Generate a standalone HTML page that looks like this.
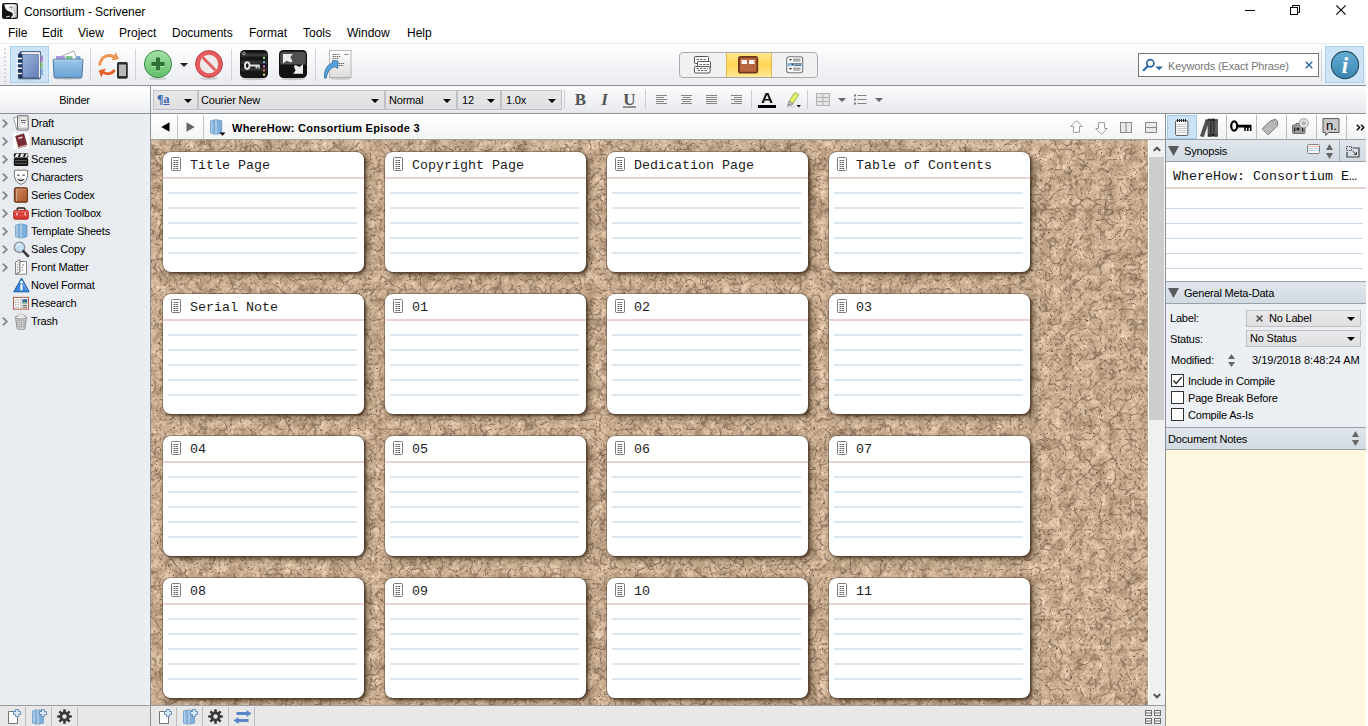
<!DOCTYPE html>
<html>
<head>
<meta charset="utf-8">
<title>Consortium - Scrivener</title>
<style>
*{box-sizing:border-box;margin:0;padding:0}
html,body{width:1368px;height:726px;overflow:hidden;background:#fff}
body{position:relative;font-family:"Liberation Sans",sans-serif;font-size:11px;color:#000}
svg{display:block;overflow:visible;position:absolute}
.a{position:absolute}
#title{position:absolute;left:0;top:0;width:1368px;height:22px;background:#fff}
#title .t{position:absolute;left:24px;top:5px;font-size:12px;line-height:15px;letter-spacing:-0.07px;white-space:nowrap}
#menu{position:absolute;left:0;top:22px;width:1368px;height:22px;background:#fff}
#menu span{position:absolute;top:4px;font-size:12px;line-height:15px;white-space:nowrap}
#tb{position:absolute;left:0;top:44px;width:1366px;height:42px;background:linear-gradient(#ffffff 0%,#f6f7f9 40%,#e9ebef 100%);border-bottom:1px solid #8a8e96}
.vs{position:absolute;width:1px;background:#cfd2d7}
.sel{position:absolute;background:#cde4f7;border:1px solid #a6d0f3}
#binderhdr{position:absolute;left:0;top:86px;width:150px;height:28px;background:linear-gradient(#ffffff,#eceef1);border-bottom:1px solid #8d9198;text-align:center;line-height:28px;font-size:11px;letter-spacing:-0.2px;padding-right:1px}
#fmt{position:absolute;left:151px;top:86px;width:1215px;height:28px;background:linear-gradient(#fcfcfd,#e7e9ed);border-bottom:1px solid #8d9198}
.combo{position:absolute;top:4px;height:20px;background:linear-gradient(#e8e8e9,#dfdfe1);border:1px solid #bfc1c5;font-size:11px;line-height:19px;padding-left:3px;white-space:nowrap;letter-spacing:-0.2px}
.combo i{position:absolute;right:5px;top:8px;width:0;height:0;border-left:4px solid transparent;border-right:4px solid transparent;border-top:4px solid #000}
.dd{position:absolute;width:0;height:0;border-left:4px solid transparent;border-right:4px solid transparent;border-top:4px solid #666}
#binder{position:absolute;left:0;top:114px;width:150px;height:591px;background:linear-gradient(90deg,#e8ecf1 0,#e8ecf1 144px,#ebeef3 145px,#ebeef3 150px)}
.row{position:absolute;left:0;width:150px;height:18px}
.row span{position:absolute;left:31px;top:2px;line-height:14px;font-size:11px;letter-spacing:-0.2px;white-space:nowrap}
.row svg.ch{left:2px;top:5px}
.row svg.ic{left:13px;top:1px}
#bsplit{position:absolute;left:150px;top:86px;width:1px;height:640px;background:#8d9198}
.foot{position:absolute;top:705px;height:21px;background:#e8e8e8;border-top:1px solid #999da3}
.foot .vs{top:1px;height:20px;background:#bdbdbd}
#edhdr{position:absolute;left:151px;top:114px;width:1014px;height:26px;background:linear-gradient(#ffffff,#f4f4f5);border-bottom:1px solid #a0a0a0}
#edhdr .ttl{position:absolute;left:81px;top:7px;font-size:11px;font-weight:bold;line-height:14px;white-space:nowrap;letter-spacing:0.25px}
#edhdr .vs{top:1px;height:24px;background:#c4c4c4}
#cork{position:absolute;left:151px;top:140px;width:997px;height:565px;overflow:hidden;background:#c2a990}
#corktex{position:absolute;left:0;top:0;width:997px;height:565px;filter:url(#ck);background:#c2a990}
.card{position:absolute;width:201px;height:120px;background:#fff;border-radius:8px;box-shadow:0 0 0 1px rgba(85,68,52,.4),2px 2px 2px 0 rgba(45,28,12,.5),3px 3px 7px 0 rgba(45,28,12,.5)}
.card .tt{position:absolute;left:27px;top:6px;font-family:"Liberation Mono",monospace;font-size:13.33px;line-height:16px;white-space:nowrap;color:#1c1c1c}
.card .pk{position:absolute;left:0;top:25px;width:201px;height:2px;background:#ecd2d0}
.card .bl{position:absolute;left:5px;top:40px;width:189px;height:62px;background:repeating-linear-gradient(#dae6f0 0,#dae6f0 2px,transparent 2px,transparent 15px)}
.card svg{left:8px;top:5px}
#vsb{position:absolute;left:1148px;top:140px;width:17px;height:565px;background:#f0f0f0;border-left:1px solid #fff}
#vsb .th{position:absolute;left:0;top:17px;width:15px;height:263px;background:#cdcdcd}
#isplit{position:absolute;left:1165px;top:114px;width:1px;height:612px;background:#8d9198}
#insp{position:absolute;left:1166px;top:86px;width:200px;height:640px;background:#eceff3;overflow:hidden}
.ihdr{position:absolute;left:0;width:202px;background:linear-gradient(#e0e6ec,#d2dae2);border-top:1px solid #9aa0a8;border-bottom:1px solid #9aa0a8;font-size:11px;white-space:nowrap;letter-spacing:-0.2px}
.cb{position:absolute;left:5px;width:13px;height:13px;background:#fff;border:1px solid #333}
.lbl{position:absolute;font-size:11px;line-height:14px;white-space:nowrap;letter-spacing:-0.2px}
.icmb{position:absolute;left:80px;width:115px;height:17px;background:linear-gradient(#e9e9ea,#e0e0e2);border:1px solid #bfc1c5;font-size:11px;line-height:15px;white-space:nowrap;letter-spacing:-0.2px}
.icmb i{position:absolute;right:5px;top:6px;width:0;height:0;border-left:4px solid transparent;border-right:4px solid transparent;border-top:4px solid #000}
</style>
</head>
<body>
<svg width="0" height="0" style="position:absolute">
<defs>
<filter id="ck" x="0" y="0" width="100%" height="100%" color-interpolation-filters="sRGB">
 <feTurbulence type="turbulence" baseFrequency="0.1" numOctaves="2" seed="8" result="t"/>
 <feColorMatrix in="t" type="matrix" values="0 0 0 0 0.47  0 0 0 0 0.37  0 0 0 0 0.29  -5 0 0 0 0.8" result="crease"/>
 <feTurbulence type="fractalNoise" baseFrequency="0.4" numOctaves="2" seed="2" result="n"/>
 <feColorMatrix in="n" type="matrix" values="0 0 0 0 0.42  0 0 0 0 0.32  0 0 0 0 0.24  -6 0 0 0 1.95" result="speck"/>
 <feTurbulence type="fractalNoise" baseFrequency="0.09" numOctaves="2" seed="4" result="f1"/>
 <feTurbulence type="fractalNoise" baseFrequency="0.33" numOctaves="2" seed="9" result="f2"/>
 <feComposite in="f1" in2="f2" operator="arithmetic" k1="0" k2="0.55" k3="0.45" k4="0" result="f"/>
 <feColorMatrix in="f" type="matrix" values="0.62 0 0 0 0.486  0.62 0 0 0 0.381  0.62 0 0 0 0.272  0 0 0 0 1" result="base"/>
 <feMerge><feMergeNode in="base"/><feMergeNode in="crease"/><feMergeNode in="speck"/></feMerge>
</filter>
<linearGradient id="gGreen" x1="0" y1="0" x2="0" y2="1"><stop offset="0" stop-color="#a6e0a8"/><stop offset="1" stop-color="#5fbf68"/></linearGradient>
<linearGradient id="gBlueCov" x1="0" y1="0" x2="1" y2="1"><stop offset="0" stop-color="#9db3dc"/><stop offset="1" stop-color="#6480b8"/></linearGradient>
<linearGradient id="gFolder" x1="0" y1="0" x2="0" y2="1"><stop offset="0" stop-color="#9cc6ea"/><stop offset="1" stop-color="#6aa3d4"/></linearGradient>
<linearGradient id="gInfo" x1="0" y1="0" x2="0" y2="1"><stop offset="0" stop-color="#62aed3"/><stop offset="1" stop-color="#3a86b2"/></linearGradient>
<linearGradient id="gYel" x1="0" y1="0" x2="0" y2="1"><stop offset="0" stop-color="#ffe78f"/><stop offset="0.5" stop-color="#ffd659"/><stop offset="1" stop-color="#ffe993"/></linearGradient>
<linearGradient id="gPaper" x1="0" y1="0" x2="0" y2="1"><stop offset="0" stop-color="#ffffff"/><stop offset="1" stop-color="#dcdcdc"/></linearGradient>
<linearGradient id="gBook" x1="0" y1="0" x2="1" y2="0"><stop offset="0" stop-color="#b9d6ee"/><stop offset="1" stop-color="#6a9fd0"/></linearGradient>
</defs></svg>
<!-- TITLE -->
<div id="title">
<svg width="16" height="16" style="left:2px;top:3px" viewBox="0 0 16 16"><defs><linearGradient id="gS" x1="0" y1="0" x2="1" y2="1"><stop offset="0" stop-color="#ffffff"/><stop offset="1" stop-color="#b9b9b9"/></linearGradient></defs><rect x="0" y="0" width="16" height="16" rx="2.200" fill="#151515"/><path d="M2.400 1.200H13.800Q14.800 1.200 14.800 2.200V13.800Q14.800 14.800 13.800 14.800H10.500C12.800 12 12 9.600 8.600 8.100 4.800 6.500 2.400 5 2.400 1.200Z" fill="url(#gS)"/><path d="M11.800 2.800C8.500 1.800 4.300 2.400 4.300 4.900 4.300 6.800 7.800 7.500 9.800 8.700 12.200 10.100 12.300 12.600 9.800 14.400" fill="none" stroke="#fff" stroke-width="1.500" stroke-linecap="round"/><path d="M10.800 4.300C9.600 3.500 8 3.800 7.800 4.800" fill="none" stroke="#666" stroke-width=".9"/><path d="M4.500 14L7.500 13.200" stroke="#eee" stroke-width="1" stroke-linecap="round"/></svg>
<div class="t">Consortium - Scrivener</div>
<svg width="11" height="1" style="left:1245px;top:10px"><rect width="10" height="1" fill="#000"/></svg>
<svg width="10" height="10" style="left:1290px;top:5px" viewBox="0 0 10 10"><path d="M2.5 2.5V0.5H9.5V7.5H7.5" fill="none" stroke="#000" stroke-width="1"/><rect x="0.5" y="2.500" width="7" height="7" fill="none" stroke="#000" stroke-width="1"/></svg>
<svg width="10" height="10" style="left:1336px;top:5px" viewBox="0 0 10 10"><path d="M0.300 0.300L9.700 9.700M9.700 0.300L0.300 9.700" stroke="#000" stroke-width="1.100" fill="none"/></svg>
</div>
<!-- MENU -->
<div id="menu">
<span style="left:8px">File</span><span style="left:42px">Edit</span><span style="left:78px">View</span><span style="left:119px">Project</span><span style="left:172px">Documents</span><span style="left:249px">Format</span><span style="left:303px">Tools</span><span style="left:347px">Window</span><span style="left:407px">Help</span>
</div>
<!-- TOOLBAR -->
<div class="a" style="left:0;top:43px;width:1366px;height:1px;background:#ececec"></div>
<div id="tb">
<!-- grip -->
<svg width="4" height="38" style="left:3px;top:3px"><g fill="#c3c6cb"><rect x="1.3" y="1.5" width="1.6" height="1.6"/><rect x="1.3" y="5.5" width="1.6" height="1.6"/><rect x="1.3" y="9.5" width="1.6" height="1.6"/><rect x="1.3" y="13.5" width="1.6" height="1.6"/><rect x="1.3" y="17.5" width="1.6" height="1.6"/><rect x="1.3" y="21.5" width="1.6" height="1.6"/><rect x="1.3" y="25.5" width="1.6" height="1.6"/><rect x="1.3" y="29.5" width="1.6" height="1.6"/><rect x="1.3" y="33.5" width="1.6" height="1.6"/></g></svg>
<div class="sel" style="left:10px;top:2px;width:39px;height:37px"></div>
<!-- binder notebook icon -->
<svg width="28" height="31" style="left:16px;top:6px" viewBox="0 0 28 31">
<ellipse cx="13.5" cy="29.200" rx="11" ry="1.300" fill="#000" opacity=".2"/>
<path d="M4 2.200Q4 1.200 5 1.200H23.500Q25 1.200 25 2.600V27.500Q25 28.700 24 28.700H3.200Q2 28.700 2 27.500V4.500Z" fill="#2b4570"/>
<path d="M5.500 2.100H24.200V4.300H5.500Z" fill="#f2f4f8"/>
<rect x="22.600" y="4" width="1.700" height="23.700" fill="#eef1f6"/>
<rect x="6.400" y="4.600" width="16.100" height="23" fill="url(#gBlueCov)"/>
<rect x="2.500" y="4.600" width="3.900" height="23.400" fill="#1f3558"/>
<path d="M0.900 8.500H5.300M0.900 13.400H5.300M0.900 18.300H5.300M0.900 23.500H5.300" stroke="#fff" stroke-width="1.500" stroke-linecap="round"/>
<rect x="24.700" y="5.500" width="2.100" height="6.500" rx=".8" fill="#a97fd0"/><rect x="24.700" y="12.500" width="2.100" height="5.600" rx=".4" fill="#8ccf6a"/><rect x="24.700" y="18.600" width="2.100" height="7" rx=".8" fill="#7ea7dc"/>
</svg>
<!-- folder icon -->
<svg width="33" height="31" style="left:52px;top:6px" viewBox="0 0 33 31">
<ellipse cx="16" cy="28.400" rx="14" ry="1.300" fill="#000" opacity=".18"/>
<path d="M9.500 6.200L21.800 1 24.200 7.500 23 9.500H9.500Z" fill="#fff" stroke="#8a8a8a" stroke-width=".7" stroke-linejoin="round"/>
<rect x="4" y="6" width="9" height="4" rx="1" fill="#a995d8"/><rect x="13.600" y="6" width="7" height="4" rx="1" fill="#7cc68a"/><rect x="24.200" y="6" width="4.200" height="4" rx="1" fill="#7aa6da"/>
<path d="M1.200 10.200Q1.100 9.200 2.100 9.200H30Q31 9.200 30.900 10.200L29.900 26.800Q29.800 27.800 28.800 27.800H3.200Q2.200 27.800 2.100 26.800Z" fill="url(#gFolder)" stroke="#3f6d96" stroke-width=".9"/>
<path d="M2 10.100H30.100" stroke="#cfe4f5" stroke-width=".7"/>
</svg>
<div class="vs" style="left:90px;top:5px;height:32px"></div>
<!-- sync icon -->
<svg width="32" height="30" style="left:97px;top:6px" viewBox="0 0 32 30">
<path d="M1.300 15.500C1.800 9 6 4.300 11.800 4.100 13.800 4.100 15.600 4.600 17.200 5.500L18.500 2 22.200 9 14.800 10.600 15.900 8C14.600 7.300 13.200 7 11.800 7 7.500 7.200 4.600 10.600 4.200 15.500Z" fill="#ee9650"/>
<path d="M1.600 20.400L9 18.500 7.300 21.400C8.800 22.200 10.600 22.500 12.300 22 14.200 21.500 15.600 20.500 16.600 19L18.800 20.800C17.500 23 15.400 24.500 12.800 25 10.300 25.400 7.900 24.900 5.900 23.700L4.400 27.800Z" fill="#e2622c"/>
<rect x="20" y="12.100" width="10.800" height="16.600" rx="1.600" fill="#2e2e2e"/><rect x="22" y="14.500" width="7" height="11.500" fill="#b8b8b8"/>
</svg>
<div class="vs" style="left:135px;top:5px;height:32px"></div>
<!-- add (green) center page (158,64) r14 => tb (158,20) -->
<svg width="30" height="32" style="left:143px;top:5px" viewBox="0 0 30 32">
<ellipse cx="15" cy="29.5" rx="9" ry="1.3" fill="#000" opacity=".15"/>
<circle cx="15" cy="15" r="13.6" fill="url(#gGreen)" stroke="#3f8a46" stroke-width="1"/>
<path d="M13 8.5H17V13H21.5V17H17V21.5H13V17H8.500V13H13Z" fill="#2f7137"/>
<path d="M13 22H17M8.500 17.500H12.500M17.500 17.500H21.500" stroke="#c9f0c8" stroke-width=".8" opacity=".8"/>
</svg>
<div class="dd" style="left:180px;top:19px;border-top-color:#222"></div>
<!-- delete (red) center page (209,64) -->
<svg width="30" height="32" style="left:194px;top:5px" viewBox="0 0 30 32">
<ellipse cx="15" cy="29.5" rx="9" ry="1.3" fill="#000" opacity=".15"/>
<circle cx="15" cy="15" r="13.4" fill="#e55c5e" stroke="#b9393d" stroke-width=".9"/>
<circle cx="15" cy="15" r="9.200" fill="#eeeaea"/>
<path d="M7.800 9.600L20.400 22.200 22.400 20.200 9.800 7.600Z" fill="#e55c5e"/>
</svg>
<div class="vs" style="left:231px;top:5px;height:32px"></div>
<!-- keywords HUD icon page x240-268,y50-78 -->
<svg width="29" height="31" style="left:240px;top:6px" viewBox="0 0 29 31">
<ellipse cx="14" cy="29" rx="12" ry="1.2" fill="#000" opacity=".18"/>
<rect x="0" y="0" width="28" height="28" rx="4.500" fill="#161616"/>
<rect x="0.800" y="3.500" width="26.400" height="3" fill="#3a3a3a"/><rect x="1" y="10.500" width="26" height="3.500" fill="#2e2e2e"/><rect x="1" y="17.500" width="26" height="3.500" fill="#2e2e2e"/>
<circle cx="4" cy="3.300" r="1.300" fill="none" stroke="#ddd" stroke-width=".7"/>
<g fill="none" stroke="#e6e6e6" stroke-width="1.900"><ellipse cx="7.200" cy="15.600" rx="2.300" ry="3.400"/></g>
<path d="M10 14.600H19.800V18.500H18.300V16.700H17.200V18.500H15.600V16.600H10Z" fill="#e6e6e6"/>
<rect x="23" y="6.800" width="2.100" height="2.200" fill="#9ccc6f"/><rect x="23" y="11" width="2.100" height="2.200" fill="#6aa3d8"/><rect x="23" y="15.200" width="2.100" height="2.200" fill="#b56cc0"/><rect x="23" y="19.400" width="2.100" height="2.200" fill="#cf6a72"/><rect x="23" y="23.600" width="2.100" height="2.200" fill="#e3c878"/>
</svg>
<!-- full screen icon page x279-307 -->
<svg width="29" height="31" style="left:279px;top:6px" viewBox="0 0 29 31">
<ellipse cx="14" cy="29" rx="12" ry="1.200" fill="#000" opacity=".18"/>
<rect x="0" y="0" width="28" height="28" rx="4.500" fill="#111"/>
<path d="M1.300 4.500Q1.300 1.800 4.500 1.800H23.500Q26.700 1.800 26.700 4.500V14.600H1.300Z" fill="#505050"/>
<path d="M4 4H13.900L11.400 6.900 13.400 11.200 11.900 12.600 7.700 10.700 4 13.400Z" fill="#ececec"/>
<path d="M24 23.800H14.100L16.600 20.600 14.900 16.600 16.400 15.100 20.600 16.900 24 14.100Z" fill="#ececec"/>
</svg>
<div class="vs" style="left:315px;top:5px;height:32px"></div>
<!-- compile icon page x324-351,y50-78 -->
<svg width="30" height="31" style="left:323px;top:6px" viewBox="0 0 30 31">
<ellipse cx="17" cy="28.600" rx="11" ry="1.200" fill="#000" opacity=".15"/>
<rect x="6.500" y="0.500" width="21.500" height="27" fill="url(#gPaper)" stroke="#a8a8a8" stroke-width=".8"/>
<g stroke="#444" stroke-width=".8" stroke-dasharray="1.500 0.600"><path d="M9.500 4.500H16.500M21.500 4.500H25.500M9.500 6.500H17.500M9.500 8.500H16"/><path d="M15.500 13.500H21.500M15.500 15.500H20.500"/></g>
<path d="M1.500 28C1 20 4 14.500 9.500 13.200V10.500L15 11 14.600 18.500 12.300 16.700C7.500 17.500 4.500 21 3.300 28Z" fill="#56a3dd" stroke="#2a6aa2" stroke-width=".8" stroke-linejoin="round"/>
</svg>
<!-- view mode group page x679-818, y52-77 -->
<div class="a" style="left:679px;top:8px;width:139px;height:26px;border:1px solid #a9abb0;border-radius:4px;background:#f1f1f2"></div>
<div class="a" style="left:726px;top:9px;width:46px;height:24px;background:linear-gradient(#ffe78f 0%,#ffd659 50%,#ffe993 100%);border-left:1px solid #e2b84a;border-right:1px solid #e2b84a"></div>
<!-- scrivenings icon -->
<svg width="18" height="18" style="left:694px;top:12px" viewBox="0 0 18 18">
<g fill="#fff" stroke="#555" stroke-width="1"><rect x="0.500" y="0.500" width="14" height="7" rx=".8"/><rect x="3.500" y="5.500" width="13" height="7" rx=".8"/><rect x="0.500" y="10.500" width="15.500" height="6.500" rx=".8"/></g>
<g stroke="#666" stroke-width="1" stroke-dasharray="2.500 1"><path d="M2.500 3.500H12.500M5.500 8.500H15M2.500 12.500H14M3.500 14.500H14"/></g>
</svg>
<!-- corkboard icon page x738-758,y56-73 -->
<svg width="21" height="18" style="left:738px;top:12px" viewBox="0 0 21 18">
<rect x="0.900" y="0.900" width="18.400" height="15.800" rx="1.500" fill="#b8663d" stroke="#70371a" stroke-width="1.800"/>
<rect x="3.500" y="4" width="5.500" height="4" fill="#fff"/><rect x="11" y="4" width="5.500" height="4" fill="#fff"/>
<path d="M3.500 5.300H9M11 5.300H16.500" stroke="#f0c9c4" stroke-width=".6"/>
</svg>
<!-- outliner icon page x786-803,y56-73 -->
<svg width="18" height="18" style="left:786px;top:12px" viewBox="0 0 18 18">
<rect x="0.700" y="0.700" width="16" height="16" rx="2.500" fill="#fff" stroke="#777" stroke-width="1.100"/>
<rect x="1.300" y="7" width="15" height="3.200" fill="#8fb7e0"/>
<g stroke="#666" stroke-width=".9"><path d="M7 3.200H14.500M7 5H14.500M8.500 7.800H15M8.500 9.500H15M7 12.200H14.500M7 14H14.500"/></g>
<g fill="#333"><path d="M3 3L6 3 4.500 5Z"/><path d="M5 7.500L8 7.500 6.500 9.500Z"/><path d="M3 12L6 12 4.500 14Z"/></g>
</svg>
<!-- search page x1138-1319,y53-77 -->
<div class="a" style="left:1138px;top:9px;width:181px;height:24px;background:#fff;border:1px solid #767676"></div>
<svg width="22" height="16" style="left:1142px;top:13px" viewBox="0 0 22 16"><circle cx="8.300" cy="6.300" r="3.600" fill="none" stroke="#2a68a8" stroke-width="1.700"/><path d="M5.600 9.200L1.600 13.200" stroke="#2a68a8" stroke-width="2.100" stroke-linecap="round"/><path d="M13.300 9.600H21L17.150 13.300Z" fill="#2a68a8"/></svg>
<div class="a" style="left:1168px;top:15px;font-size:11px;line-height:14px;color:#767676;letter-spacing:-0.15px;white-space:nowrap">Keywords (Exact Phrase)</div>
<svg width="8" height="8" style="left:1305px;top:17px" viewBox="0 0 8 8"><path d="M0.700 0.700L7.300 7.300M7.300 0.700L0.700 7.300" stroke="#2a68a8" stroke-width="1.400"/></svg>
<div class="vs" style="left:1321px;top:5px;height:32px"></div>
<div class="sel" style="left:1325px;top:2px;width:39px;height:37px"></div>
<svg width="30" height="30" style="left:1330px;top:6px" viewBox="0 0 30 30">
<circle cx="15" cy="15" r="13.600" fill="url(#gInfo)" stroke="#274b5e" stroke-width="1.100"/>
<text x="15" y="22.500" text-anchor="middle" font-family="Liberation Serif" font-style="italic" font-weight="bold" font-size="23" fill="#fff">i</text>
</svg>
</div>
<!-- ROW2 -->
<div id="binderhdr">Binder</div>
<div id="fmt">
<!-- fmt left = 151 ; combos page x: 153-197, 198-384, 385-456, 457-500, 501-562 ; y 90-109 -->
<div class="combo" style="left:2px;width:45px"><span style="font-family:'Liberation Serif',serif;font-weight:bold;font-size:12px;color:#3b62b6;position:absolute;left:3px;top:-1px;letter-spacing:0">¶<span style="text-decoration:underline">a</span></span><i></i></div>
<div class="combo" style="left:47px;width:187px;padding-left:2px">Courier New<i></i></div>
<div class="combo" style="left:234px;width:72px">Normal<i></i></div>
<div class="combo" style="left:306px;width:44px;padding-left:4px">12<i></i></div>
<div class="combo" style="left:350px;width:61px;padding-left:4px">1.0x<i></i></div>
<div class="vs" style="left:413px;top:4px;height:19px;background:#c9ccd1"></div>
<!-- B I U: page centers 580,605,630; y 94-105 => fmt y 8-19 -->
<div class="a" style="left:423px;top:4px;width:13px;text-align:center;font-family:'Liberation Serif',serif;font-weight:bold;font-size:17px;line-height:20px;color:#555">B</div>
<div class="a" style="left:447px;top:4px;width:13px;text-align:center;font-family:'Liberation Serif',serif;font-weight:bold;font-style:italic;font-size:17px;line-height:20px;color:#555">I</div>
<div class="a" style="left:472px;top:4px;width:13px;text-align:center;font-family:'Liberation Serif',serif;font-weight:bold;font-size:17px;line-height:20px;color:#555">U</div>
<div class="a" style="left:472px;top:20px;width:13px;height:2px;background:#8f8f8f"></div>
<div class="vs" style="left:494px;top:4px;height:19px;background:#c9ccd1"></div>
<!-- align icons page x 656-667, 681-692, 706-717, 731-742 ; y 95-104 => fmt y 9-18 -->
<svg width="12" height="10" style="left:505px;top:9px" viewBox="0 0 12 10"><g stroke="#858585" stroke-width="1"><path d="M0 0.500H11M0 2.500H8M0 4.500H11M0 6.500H8M0 8.500H11"/></g></svg>
<svg width="12" height="10" style="left:530px;top:9px" viewBox="0 0 12 10"><g stroke="#858585" stroke-width="1"><path d="M0 0.500H11M1.500 2.500H9.500M0 4.500H11M1.500 6.500H9.500M0 8.500H11"/></g></svg>
<svg width="12" height="10" style="left:555px;top:9px" viewBox="0 0 12 10"><g stroke="#858585" stroke-width="1"><path d="M0 0.500H11M0 2.500H11M0 4.500H11M0 6.500H11M0 8.500H11"/></g></svg>
<svg width="12" height="10" style="left:580px;top:9px" viewBox="0 0 12 10"><g stroke="#858585" stroke-width="1"><path d="M0 0.500H11M3 2.500H11M0 4.500H11M3 6.500H11M0 8.500H11"/></g></svg>
<div class="vs" style="left:600px;top:4px;height:19px;background:#c9ccd1"></div>
<!-- text color A: page x761-774,y93-103; bar x758-776,y105-108 -->
<div class="a" style="left:607px;top:3px;width:18px;text-align:center;font-size:15px;font-weight:bold;line-height:18px;color:#111;transform:scaleX(1.12)">A</div>
<div class="a" style="left:607px;top:19px;width:18px;height:3px;background:#000"></div>
<!-- highlighter page x786-798,y92-106 -->
<svg width="16" height="16" style="left:635px;top:6px" viewBox="0 0 16 16">
<path d="M8.800 0.500L12.800 2.700 7 11.600 3 9.400Z" fill="#e3f26a" stroke="#8f9a48" stroke-width=".8" stroke-linejoin="round"/>
<path d="M3 9.400L7 11.600 5.600 13.400 2 12.300Z" fill="#c4c4c4" stroke="#808080" stroke-width=".7" stroke-linejoin="round"/>
<path d="M2 12.300L4.200 13 1 14.600Z" fill="#6a6a6a"/>
<path d="M0.800 15H9" stroke="#c8c8c8" stroke-width="1"/>
<path d="M10.500 13H15L12.750 15.500Z" fill="#111"/>
</svg>
<div class="vs" style="left:656px;top:4px;height:19px;background:#c9ccd1"></div>
<!-- table page x816-829,y93-106 -->
<svg width="14" height="13" style="left:665px;top:7px" viewBox="0 0 14 13"><rect x="0.500" y="0.500" width="13" height="12" fill="#e4e4e4" stroke="#b2b2b2"/><path d="M7 0.500V12.500M0.500 4.500H13.500M0.500 8.500H13.500" stroke="#b2b2b2" stroke-width="1"/></svg>
<div class="dd" style="left:687px;top:12px"></div>
<!-- list page x854-866,y95-105 -->
<svg width="13" height="11" style="left:703px;top:8px" viewBox="0 0 13 11"><g stroke="#858585" stroke-width="1.200"><path d="M3.500 1.500H12.500M3.500 5.500H12.500M3.500 9.500H12.500"/></g><g fill="#777"><rect x="0" y="0.500" width="2" height="2"/><rect x="0" y="4.500" width="2" height="2"/><rect x="0" y="8.500" width="2" height="2"/></g></svg>
<div class="dd" style="left:724px;top:12px"></div>
</div>
<!-- BINDER -->
<div id="binder">
<div class="row" style="top:0px"><svg class="ch" width="6" height="9" viewBox="0 0 6 9"><path d="M0.800 0.600L4.800 4.500 0.800 8.400" fill="none" stroke="#85888d" stroke-width="1.900"/></svg><svg class="ic" width="16" height="16" viewBox="0 0 16 16"><defs><linearGradient id="gDr" x1="0" y1="0" x2="0" y2="1"><stop offset="0" stop-color="#dcdcdc"/><stop offset="1" stop-color="#ffffff"/></linearGradient></defs><path d="M0.500 2.800L6.500 1.600 9 13.500 3.800 14.600Z" fill="#fff" stroke="#8a8a8a" stroke-width=".8"/><rect x="4.500" y="0.700" width="10.700" height="14.300" rx=".6" fill="url(#gDr)" stroke="#5e5e5e" stroke-width=".9"/><path d="M4.800 13.200H15" stroke="#777" stroke-width=".7"/><g fill="#777"><circle cx="6.200" cy="3" r=".5"/><circle cx="6.200" cy="6" r=".5"/><circle cx="6.200" cy="9" r=".5"/><circle cx="6.200" cy="11.600" r=".5"/></g><g stroke="#444" stroke-width="1" stroke-dasharray="1.500 .600"><path d="M8 5.500H13M8.500 7.500H12"/></g></svg><span>Draft</span></div>
<div class="row" style="top:18px"><svg class="ch" width="6" height="9" viewBox="0 0 6 9"><path d="M0.800 0.600L4.800 4.500 0.800 8.400" fill="none" stroke="#85888d" stroke-width="1.900"/></svg><svg class="ic" width="16" height="16" viewBox="0 0 16 16"><rect x="0" y="0" width="16" height="16" fill="#fff"/><path d="M2.600 3.200L10.800 0.800 14 12.600 5.800 15.200Z" fill="#7b2c34" stroke="#4f1a20" stroke-width=".6"/><path d="M5.300 4.600L9.300 3.500 9.700 5 5.700 6.100Z" fill="#e9d9d9"/><path d="M5.800 15.200L14 12.600 13.700 11.600 5.500 14.100Z" fill="#d8d0cf"/></svg><span>Manuscript</span></div>
<div class="row" style="top:36px"><svg class="ch" width="6" height="9" viewBox="0 0 6 9"><path d="M0.800 0.600L4.800 4.500 0.800 8.400" fill="none" stroke="#85888d" stroke-width="1.900"/></svg><svg class="ic" width="16" height="16" viewBox="0 0 16 16"><rect x="0.800" y="6.800" width="14.400" height="8.200" rx="1.600" fill="#151515"/><path d="M0.800 3.600Q0.800 2.200 2.200 2.200H13.800Q15.200 2.200 15.200 3.600V6.400H0.800Z" fill="#1c1c1c"/><g fill="#f1f1f1"><path d="M3.200 2.700H6.200L4.800 5.900H1.800Z"/><path d="M8.200 2.700H11.200L9.800 5.900H6.800Z"/><path d="M13.200 2.700H14.600V4.200L13.800 5.900H11.800Z"/></g><rect x="2" y="9" width="12" height="1.100" fill="#5a5a5a"/><rect x="2" y="11.800" width="12" height="1.100" fill="#5a5a5a"/></svg><span>Scenes</span></div>
<div class="row" style="top:54px"><svg class="ch" width="6" height="9" viewBox="0 0 6 9"><path d="M0.800 0.600L4.800 4.500 0.800 8.400" fill="none" stroke="#85888d" stroke-width="1.900"/></svg><svg class="ic" width="16" height="16" viewBox="0 0 16 16"><path d="M1.400 1.600Q4.700 0.500 8 1.300 11.300 0.500 14.600 1.600 15.300 7 13.400 11 11.500 14.700 8 15.300 4.500 14.700 2.600 11 0.700 7 1.400 1.600Z" fill="#fdfdfd" stroke="#666" stroke-width=".9"/><path d="M3.600 6.300Q5.200 4.600 7 6.300 5.200 7 3.600 6.300ZM9 6.300Q10.800 4.600 12.400 6.300 10.800 7 9 6.300Z" fill="#222"/><path d="M4.600 10.300Q8 13.600 11.400 10.300 8 11.900 4.600 10.300Z" fill="#1a1a1a" stroke="#1a1a1a" stroke-width=".5"/><path d="M7.700 7.500L7.300 9.200H8.700" fill="none" stroke="#aaa" stroke-width=".6"/></svg><span>Characters</span></div>
<div class="row" style="top:72px"><svg class="ch" width="6" height="9" viewBox="0 0 6 9"><path d="M0.800 0.600L4.800 4.500 0.800 8.400" fill="none" stroke="#85888d" stroke-width="1.900"/></svg><svg class="ic" width="16" height="16" viewBox="0 0 16 16"><defs><linearGradient id="gCx" x1="0" y1="0" x2="1" y2="1"><stop offset="0" stop-color="#cf8557"/><stop offset="1" stop-color="#a9562b"/></linearGradient></defs><rect x="1.300" y="0.700" width="13.200" height="14.600" rx="1.500" fill="#8a4420" stroke="#5e2c10" stroke-width=".9"/><rect x="3.800" y="2" width="10" height="12.200" fill="url(#gCx)"/><path d="M3.300 1.700V14.300" stroke="#e7c9ae" stroke-width=".9"/><path d="M3.800 2H13.800" stroke="#e0a37c" stroke-width=".7"/></svg><span>Series Codex</span></div>
<div class="row" style="top:90px"><svg class="ch" width="6" height="9" viewBox="0 0 6 9"><path d="M0.800 0.600L4.800 4.500 0.800 8.400" fill="none" stroke="#85888d" stroke-width="1.900"/></svg><svg class="ic" width="16" height="16" viewBox="0 0 16 16"><defs><linearGradient id="gTb" x1="0" y1="0" x2="0" y2="1"><stop offset="0" stop-color="#f0625c"/><stop offset="1" stop-color="#d22f2a"/></linearGradient></defs><path d="M4 5.500V4.400Q4 3 5.400 3H10.600Q12 3 12 4.400V5.500" fill="none" stroke="#241616" stroke-width="1.300"/><rect x="0.600" y="5.300" width="14.800" height="9" rx="1.600" fill="url(#gTb)" stroke="#a52822" stroke-width=".8"/><path d="M0.800 8.600H15.200" stroke="#b8302b" stroke-width=".8"/><rect x="3.300" y="7.600" width="1.200" height="2.800" rx=".4" fill="#fbe9e8"/><rect x="11.500" y="7.600" width="1.200" height="2.800" rx=".4" fill="#fbe9e8"/></svg><span>Fiction Toolbox</span></div>
<div class="row" style="top:108px"><svg class="ch" width="6" height="9" viewBox="0 0 6 9"><path d="M0.800 0.600L4.800 4.500 0.800 8.400" fill="none" stroke="#85888d" stroke-width="1.900"/></svg><svg class="ic" width="16" height="16" viewBox="0 0 16 16"><path d="M2.500 2.200L7.500 0.800V15.200L2.500 13.600Z" fill="url(#gBook)" stroke="#5c8fc0" stroke-width=".7"/><path d="M8.500 0.800L14 2.200V13.600L8.500 15.200Z" fill="#7fb0dc" stroke="#5c8fc0" stroke-width=".7"/><path d="M7.500 0.800H8.500V15.200H7.500Z" fill="#dbeaf7"/></svg><span>Template Sheets</span></div>
<div class="row" style="top:126px"><svg class="ch" width="6" height="9" viewBox="0 0 6 9"><path d="M0.800 0.600L4.800 4.500 0.800 8.400" fill="none" stroke="#85888d" stroke-width="1.900"/></svg><svg class="ic" width="17" height="17" viewBox="0 0 17 17"><circle cx="6.500" cy="6.300" r="5.200" fill="#bfe0f6" stroke="#8a8f96" stroke-width="1.400"/><path d="M3.500 5.500Q4.500 3 7 3" fill="none" stroke="#fff" stroke-width="1"/><path d="M10.300 10.200L15 15" stroke="#3a3a3a" stroke-width="2.600" stroke-linecap="round"/></svg><span>Sales Copy</span></div>
<div class="row" style="top:144px"><svg class="ch" width="6" height="9" viewBox="0 0 6 9"><path d="M0.800 0.600L4.800 4.500 0.800 8.400" fill="none" stroke="#85888d" stroke-width="1.900"/></svg><svg class="ic" width="16" height="16" viewBox="0 0 16 16"><path d="M2.500 3L7 0.800V13L2.500 15.200Z" fill="#f4f4f4" stroke="#777" stroke-width=".9"/><path d="M7 2.500H13.500V15.200H2.500L7 13Z" fill="#fff" stroke="#777" stroke-width=".9"/><g stroke="#666" stroke-width=".8"><path d="M9 6H11M8.500 8.500H10M9 11H10.500"/></g><g stroke="#888" stroke-width=".7"><path d="M4 6L5.300 5.400M4 8.500L5.300 7.900M4 11L5.300 10.400"/></g></svg><span>Front Matter</span></div>
<div class="row" style="top:162px"><svg class="ic" width="17" height="16" viewBox="0 0 17 16"><path d="M8.500 1L16.200 14.800H0.800Z" fill="#3e86d8" stroke="#1f5aa6" stroke-width="1" stroke-linejoin="round"/><path d="M8.500 3.200L13.800 13.200" stroke="#8cc0f2" stroke-width=".7" fill="none"/><rect x="7.400" y="7.500" width="2.200" height="5.800" fill="#fff"/><circle cx="8.500" cy="5.300" r="1.300" fill="#fff"/></svg><span>Novel Format</span></div>
<div class="row" style="top:180px"><svg class="ic" width="16" height="16" viewBox="0 0 17 16"><rect x="0.500" y="2" width="16" height="12.500" fill="#fff" stroke="#b2543e" stroke-width="1"/><path d="M8.500 2.500V14" stroke="#999" stroke-width=".8"/><g stroke="#777" stroke-width=".9" stroke-dasharray="1.500 1"><path d="M2.300 5H7M2.300 7.500H7M2.300 10H7M2.300 12.500H7"/></g><rect x="10" y="4" width="5.200" height="4.500" fill="#2d5f9e"/><path d="M10 8.500L12 6.300 13.300 7.500 14.200 6.800 15.200 8.500Z" fill="#9cc47a"/><g stroke="#444" stroke-width="1"><path d="M10 10.500H15M10 12.500H15"/></g></svg><span>Research</span></div>
<div class="row" style="top:198px"><svg class="ch" width="6" height="9" viewBox="0 0 6 9"><path d="M0.800 0.600L4.800 4.500 0.800 8.400" fill="none" stroke="#85888d" stroke-width="1.900"/></svg><svg class="ic" width="16" height="17" viewBox="0 0 16 17"><path d="M2.600 4.500L4 15.300Q4.100 16.200 5 16.200H11Q11.900 16.200 12 15.300L13.400 4.500Z" fill="#e9e9e9" stroke="#777" stroke-width=".8"/><g stroke="#9a9a9a" stroke-width=".6"><path d="M4.500 6L5.500 15M6.500 6L7 15M8.500 6V15M10.500 6L10 15M12 6L11.200 15M3.500 7.500H12.500M3.700 9.500H12.300M4 11.500H12M4.200 13.500H11.800"/></g><ellipse cx="8" cy="4.300" rx="5.800" ry="1.600" fill="#f6f6f6" stroke="#777" stroke-width=".8"/><path d="M5 3L6.500 0.800 8.500 2.200 10 1 11.200 3.200" fill="#fff" stroke="#999" stroke-width=".6"/></svg><span>Trash</span></div>
</div>
<div class="foot" style="left:0;width:150px"><svg width="14" height="15" style="left:8px;top:3px" viewBox="0 0 14 15"><path d="M0.500 2.500H9.500V14.500H0.500Z" fill="#fff" stroke="#666" stroke-width=".9"/><path d="M7.500 0.500H10.500V2.500H12.500V5.500H10.500V7.500H7.500V5.500H5.500V2.500H7.500Z" fill="#dceaf8" stroke="#5b86b8" stroke-width=".9"/></svg><div class="vs" style="left:25px"></div><svg width="16" height="16" style="left:32px;top:3px" viewBox="0 0 16 16"><path d="M0.500 2L5.500 0.800V15.200L0.500 14Z" fill="url(#gBook)" stroke="#5c8fc0" stroke-width=".7"/><path d="M6.500 0.800L11.500 2V14L6.500 15.200Z" fill="#7fb0dc" stroke="#5c8fc0" stroke-width=".7"/><path d="M5.500 0.800H6.500V15.200H5.500Z" fill="#dbeaf7"/><path d="M9.500 0.500H12.500V2.500H14.500V5.500H12.500V7.500H9.500V5.500H7.500V2.500H9.500Z" fill="#dceaf8" stroke="#5b86b8" stroke-width=".9"/></svg><div class="vs" style="left:51px"></div><svg width="15" height="15" style="left:57px;top:3px" viewBox="0 0 16 16"><g fill="#3a3a3a"><circle cx="8" cy="8" r="5.300"/><g id="t"><rect x="6.600" y="0.200" width="2.800" height="15.600" rx=".4"/></g><rect x="6.600" y="0.200" width="2.800" height="15.600" rx=".4" transform="rotate(45 8 8)"/><rect x="6.600" y="0.200" width="2.800" height="15.600" rx=".4" transform="rotate(90 8 8)"/><rect x="6.600" y="0.200" width="2.800" height="15.600" rx=".4" transform="rotate(135 8 8)"/></g><circle cx="8" cy="8" r="2.400" fill="#e8e8e8"/></svg><div class="vs" style="left:77px"></div></div>
<div id="bsplit"></div>
<!-- EDITOR -->
<div id="edhdr">
<svg width="9" height="10" style="left:10px;top:8px" viewBox="0 0 9 10"><path d="M8.500 0.300V9.700L0.300 5Z" fill="#000"/></svg>
<div class="vs" style="left:26px"></div>
<svg width="9" height="10" style="left:35px;top:8px" viewBox="0 0 9 10"><path d="M0.500 0.300V9.700L8.700 5Z" fill="#666"/></svg>
<div class="vs" style="left:52px"></div>
<svg width="16" height="17" style="left:59px;top:5px" viewBox="0 0 16 17"><path d="M0.500 1.800L5.500 0.600V15.400L0.500 14Z" fill="url(#gBook)" stroke="#5c8fc0" stroke-width=".7"/><path d="M6.500 0.600L11.800 1.800V14L6.500 15.400Z" fill="#7fb0dc" stroke="#5c8fc0" stroke-width=".7"/><path d="M5.500 0.600H6.500V15.400H5.500Z" fill="#dbeaf7"/><path d="M9.500 13.500H15.500L12.500 16.800Z" fill="#000"/></svg>
<div class="ttl">WhereHow: Consortium Episode 3</div>
<svg width="13" height="13" style="left:919px;top:6px" viewBox="0 0 13 13"><path d="M6.500 0.700L12.300 6.500H9.500V12.300H3.500V6.500H0.700Z" fill="#fff" stroke="#9b9b9b" stroke-width="1" stroke-linejoin="round"/></svg>
<svg width="13" height="13" style="left:944px;top:8px" viewBox="0 0 13 13"><path d="M6.500 12.300L12.300 6.500H9.500V0.700H3.500V6.500H0.700Z" fill="#fff" stroke="#9b9b9b" stroke-width="1" stroke-linejoin="round"/></svg>
<svg width="12" height="11" style="left:969px;top:8px" viewBox="0 0 12 11"><rect x="0.500" y="0.500" width="11" height="10" fill="#e9e9e9" stroke="#8a8a8a"/><path d="M6 0.500V10.500" stroke="#8a8a8a"/></svg>
<svg width="12" height="11" style="left:994px;top:8px" viewBox="0 0 12 11"><rect x="0.500" y="0.500" width="11" height="10" fill="#e9e9e9" stroke="#8a8a8a"/><path d="M0.500 5.500H11.500" stroke="#8a8a8a"/></svg>
</div>
<div id="cork"><div id="corktex"></div>
<div class="card" style="left:12px;top:12px"><svg width="11" height="15" viewBox="0 0 11 15"><rect x="0.500" y="0.500" width="9" height="13" rx="1" fill="#fff" stroke="#7a7a7a" stroke-width="1"/><g stroke="#5a5a5a" stroke-width="1" stroke-dasharray="2 0.700"><path d="M2.500 3.500H7.500M2.500 5.500H7M2.500 7.500H7.500M2.500 9.500H7M2.500 11.500H7.500"/></g></svg><div class="tt">Title Page</div><div class="pk"></div><div class="bl"></div></div>
<div class="card" style="left:234px;top:12px"><svg width="11" height="15" viewBox="0 0 11 15"><rect x="0.500" y="0.500" width="9" height="13" rx="1" fill="#fff" stroke="#7a7a7a" stroke-width="1"/><g stroke="#5a5a5a" stroke-width="1" stroke-dasharray="2 0.700"><path d="M2.500 3.500H7.500M2.500 5.500H7M2.500 7.500H7.500M2.500 9.500H7M2.500 11.500H7.500"/></g></svg><div class="tt">Copyright Page</div><div class="pk"></div><div class="bl"></div></div>
<div class="card" style="left:456px;top:12px"><svg width="11" height="15" viewBox="0 0 11 15"><rect x="0.500" y="0.500" width="9" height="13" rx="1" fill="#fff" stroke="#7a7a7a" stroke-width="1"/><g stroke="#5a5a5a" stroke-width="1" stroke-dasharray="2 0.700"><path d="M2.500 3.500H7.500M2.500 5.500H7M2.500 7.500H7.500M2.500 9.500H7M2.500 11.500H7.500"/></g></svg><div class="tt">Dedication Page</div><div class="pk"></div><div class="bl"></div></div>
<div class="card" style="left:678px;top:12px"><svg width="11" height="15" viewBox="0 0 11 15"><rect x="0.500" y="0.500" width="9" height="13" rx="1" fill="#fff" stroke="#7a7a7a" stroke-width="1"/><g stroke="#5a5a5a" stroke-width="1" stroke-dasharray="2 0.700"><path d="M2.500 3.500H7.500M2.500 5.500H7M2.500 7.500H7.500M2.500 9.500H7M2.500 11.500H7.500"/></g></svg><div class="tt">Table of Contents</div><div class="pk"></div><div class="bl"></div></div>
<div class="card" style="left:12px;top:154px"><svg width="11" height="15" viewBox="0 0 11 15"><rect x="0.500" y="0.500" width="9" height="13" rx="1" fill="#fff" stroke="#7a7a7a" stroke-width="1"/><g stroke="#5a5a5a" stroke-width="1" stroke-dasharray="2 0.700"><path d="M2.500 3.500H7.500M2.500 5.500H7M2.500 7.500H7.500M2.500 9.500H7M2.500 11.500H7.500"/></g></svg><div class="tt">Serial Note</div><div class="pk"></div><div class="bl"></div></div>
<div class="card" style="left:234px;top:154px"><svg width="11" height="15" viewBox="0 0 11 15"><rect x="0.500" y="0.500" width="9" height="13" rx="1" fill="#fff" stroke="#7a7a7a" stroke-width="1"/><g stroke="#5a5a5a" stroke-width="1" stroke-dasharray="2 0.700"><path d="M2.500 3.500H7.500M2.500 5.500H7M2.500 7.500H7.500M2.500 9.500H7M2.500 11.500H7.500"/></g></svg><div class="tt">01</div><div class="pk"></div><div class="bl"></div></div>
<div class="card" style="left:456px;top:154px"><svg width="11" height="15" viewBox="0 0 11 15"><rect x="0.500" y="0.500" width="9" height="13" rx="1" fill="#fff" stroke="#7a7a7a" stroke-width="1"/><g stroke="#5a5a5a" stroke-width="1" stroke-dasharray="2 0.700"><path d="M2.500 3.500H7.500M2.500 5.500H7M2.500 7.500H7.500M2.500 9.500H7M2.500 11.500H7.500"/></g></svg><div class="tt">02</div><div class="pk"></div><div class="bl"></div></div>
<div class="card" style="left:678px;top:154px"><svg width="11" height="15" viewBox="0 0 11 15"><rect x="0.500" y="0.500" width="9" height="13" rx="1" fill="#fff" stroke="#7a7a7a" stroke-width="1"/><g stroke="#5a5a5a" stroke-width="1" stroke-dasharray="2 0.700"><path d="M2.500 3.500H7.500M2.500 5.500H7M2.500 7.500H7.500M2.500 9.500H7M2.500 11.500H7.500"/></g></svg><div class="tt">03</div><div class="pk"></div><div class="bl"></div></div>
<div class="card" style="left:12px;top:296px"><svg width="11" height="15" viewBox="0 0 11 15"><rect x="0.500" y="0.500" width="9" height="13" rx="1" fill="#fff" stroke="#7a7a7a" stroke-width="1"/><g stroke="#5a5a5a" stroke-width="1" stroke-dasharray="2 0.700"><path d="M2.500 3.500H7.500M2.500 5.500H7M2.500 7.500H7.500M2.500 9.500H7M2.500 11.500H7.500"/></g></svg><div class="tt">04</div><div class="pk"></div><div class="bl"></div></div>
<div class="card" style="left:234px;top:296px"><svg width="11" height="15" viewBox="0 0 11 15"><rect x="0.500" y="0.500" width="9" height="13" rx="1" fill="#fff" stroke="#7a7a7a" stroke-width="1"/><g stroke="#5a5a5a" stroke-width="1" stroke-dasharray="2 0.700"><path d="M2.500 3.500H7.500M2.500 5.500H7M2.500 7.500H7.500M2.500 9.500H7M2.500 11.500H7.500"/></g></svg><div class="tt">05</div><div class="pk"></div><div class="bl"></div></div>
<div class="card" style="left:456px;top:296px"><svg width="11" height="15" viewBox="0 0 11 15"><rect x="0.500" y="0.500" width="9" height="13" rx="1" fill="#fff" stroke="#7a7a7a" stroke-width="1"/><g stroke="#5a5a5a" stroke-width="1" stroke-dasharray="2 0.700"><path d="M2.500 3.500H7.500M2.500 5.500H7M2.500 7.500H7.500M2.500 9.500H7M2.500 11.500H7.500"/></g></svg><div class="tt">06</div><div class="pk"></div><div class="bl"></div></div>
<div class="card" style="left:678px;top:296px"><svg width="11" height="15" viewBox="0 0 11 15"><rect x="0.500" y="0.500" width="9" height="13" rx="1" fill="#fff" stroke="#7a7a7a" stroke-width="1"/><g stroke="#5a5a5a" stroke-width="1" stroke-dasharray="2 0.700"><path d="M2.500 3.500H7.500M2.500 5.500H7M2.500 7.500H7.500M2.500 9.500H7M2.500 11.500H7.500"/></g></svg><div class="tt">07</div><div class="pk"></div><div class="bl"></div></div>
<div class="card" style="left:12px;top:438px"><svg width="11" height="15" viewBox="0 0 11 15"><rect x="0.500" y="0.500" width="9" height="13" rx="1" fill="#fff" stroke="#7a7a7a" stroke-width="1"/><g stroke="#5a5a5a" stroke-width="1" stroke-dasharray="2 0.700"><path d="M2.500 3.500H7.500M2.500 5.500H7M2.500 7.500H7.500M2.500 9.500H7M2.500 11.500H7.500"/></g></svg><div class="tt">08</div><div class="pk"></div><div class="bl"></div></div>
<div class="card" style="left:234px;top:438px"><svg width="11" height="15" viewBox="0 0 11 15"><rect x="0.500" y="0.500" width="9" height="13" rx="1" fill="#fff" stroke="#7a7a7a" stroke-width="1"/><g stroke="#5a5a5a" stroke-width="1" stroke-dasharray="2 0.700"><path d="M2.500 3.500H7.500M2.500 5.500H7M2.500 7.500H7.500M2.500 9.500H7M2.500 11.500H7.500"/></g></svg><div class="tt">09</div><div class="pk"></div><div class="bl"></div></div>
<div class="card" style="left:456px;top:438px"><svg width="11" height="15" viewBox="0 0 11 15"><rect x="0.500" y="0.500" width="9" height="13" rx="1" fill="#fff" stroke="#7a7a7a" stroke-width="1"/><g stroke="#5a5a5a" stroke-width="1" stroke-dasharray="2 0.700"><path d="M2.500 3.500H7.500M2.500 5.500H7M2.500 7.500H7.500M2.500 9.500H7M2.500 11.500H7.500"/></g></svg><div class="tt">10</div><div class="pk"></div><div class="bl"></div></div>
<div class="card" style="left:678px;top:438px"><svg width="11" height="15" viewBox="0 0 11 15"><rect x="0.500" y="0.500" width="9" height="13" rx="1" fill="#fff" stroke="#7a7a7a" stroke-width="1"/><g stroke="#5a5a5a" stroke-width="1" stroke-dasharray="2 0.700"><path d="M2.500 3.500H7.500M2.500 5.500H7M2.500 7.500H7.500M2.500 9.500H7M2.500 11.500H7.500"/></g></svg><div class="tt">11</div><div class="pk"></div><div class="bl"></div></div>
</div>
<div id="vsb"><div class="th"></div><svg width="8" height="6" style="left:4px;top:6px" viewBox="0 0 8 6"><path d="M0.800 4.900L4 1.700 7.200 4.900" fill="none" stroke="#505050" stroke-width="2"/></svg><svg width="8" height="6" style="left:4px;top:553px" viewBox="0 0 8 6"><path d="M0.800 1.100L4 4.300 7.200 1.100" fill="none" stroke="#505050" stroke-width="2"/></svg></div>
<div class="foot" style="left:151px;width:1014px"><svg width="14" height="15" style="left:8px;top:3px" viewBox="0 0 14 15"><path d="M0.500 2.500H9.500V14.500H0.500Z" fill="#fff" stroke="#666" stroke-width=".9"/><path d="M7.500 0.500H10.500V2.500H12.500V5.500H10.500V7.500H7.500V5.500H5.500V2.500H7.500Z" fill="#dceaf8" stroke="#5b86b8" stroke-width=".9"/></svg><div class="vs" style="left:25px"></div><svg width="16" height="16" style="left:32px;top:3px" viewBox="0 0 16 16"><path d="M0.500 2L5.500 0.800V15.200L0.500 14Z" fill="url(#gBook)" stroke="#5c8fc0" stroke-width=".7"/><path d="M6.500 0.800L11.500 2V14L6.500 15.200Z" fill="#7fb0dc" stroke="#5c8fc0" stroke-width=".7"/><path d="M5.500 0.800H6.500V15.200H5.500Z" fill="#dbeaf7"/><path d="M9.500 0.500H12.500V2.500H14.500V5.500H12.500V7.500H9.500V5.500H7.500V2.500H9.500Z" fill="#dceaf8" stroke="#5b86b8" stroke-width=".9"/></svg><div class="vs" style="left:51px"></div><svg width="15" height="15" style="left:57px;top:3px" viewBox="0 0 16 16"><g fill="#3a3a3a"><circle cx="8" cy="8" r="5.300"/><g id="t"><rect x="6.600" y="0.200" width="2.800" height="15.600" rx=".4"/></g><rect x="6.600" y="0.200" width="2.800" height="15.600" rx=".4" transform="rotate(45 8 8)"/><rect x="6.600" y="0.200" width="2.800" height="15.600" rx=".4" transform="rotate(90 8 8)"/><rect x="6.600" y="0.200" width="2.800" height="15.600" rx=".4" transform="rotate(135 8 8)"/></g><circle cx="8" cy="8" r="2.400" fill="#e8e8e8"/></svg><div class="vs" style="left:77px"></div><svg width="19" height="14" style="left:82px;top:4px" viewBox="0 0 19 14"><path d="M3.500 2H13.500V0L18.500 3.500 13.500 7V5H3.500Z" fill="#5a86c5"/><path d="M15.500 9H5.500V7L0.500 10.500 5.500 14V12H15.500Z" fill="#5a86c5"/></svg><div class="vs" style="left:103px"></div><svg width="17" height="15" style="left:994px;top:4px" viewBox="0 0 17 15"><g fill="#f4f4f4" stroke="#6e6e6e" stroke-width="1"><rect x="0.500" y="0.500" width="6" height="5"/><rect x="9.500" y="0.500" width="6" height="5"/><rect x="0.500" y="8.500" width="6" height="5"/><rect x="9.500" y="8.500" width="6" height="5"/></g><path d="M0.500 3H6.500M9.500 3H15.500M0.500 11H6.500M9.500 11H15.500" stroke="#6e6e6e" stroke-width="1"/></svg></div>
<!-- INSPECTOR: left=1166, top=86 ; coords = page - (1166,86) -->
<div id="insp" style="top:114px;height:612px"><div style="position:absolute;left:0;top:-28px;width:200px;height:640px">
<!-- tab row page y114-139 => 28-53 -->
<div class="a" style="left:0;top:28px;width:202px;height:25px;background:linear-gradient(#ffffff,#f1f2f4)"></div>
<div class="sel" style="left:1px;top:29px;width:30px;height:24px;background:#cae1f6;border-color:#9fcbf0"></div>
<div class="vs" style="left:60px;top:29px;height:24px;background:#bcbcbc"></div><div class="vs" style="left:90px;top:29px;height:24px;background:#bcbcbc"></div><div class="vs" style="left:120px;top:29px;height:24px;background:#bcbcbc"></div><div class="vs" style="left:150px;top:29px;height:24px;background:#bcbcbc"></div><div class="vs" style="left:180px;top:29px;height:24px;background:#bcbcbc"></div>
<!-- notepad page x1175.5-1188,y120-136 -->
<svg width="14" height="17" style="left:9px;top:33px" viewBox="0 0 14 17"><rect x="0.600" y="1.600" width="12.300" height="14.800" rx="1" fill="#fff" stroke="#555" stroke-width="1"/><g stroke="#b9b9b9" stroke-width=".8"><path d="M2 5.500H11.500M2 7.500H11.500M2 9.500H11.500M2 11.500H11.500M2 13.500H11.500"/></g><g stroke="#222" stroke-width="1"><path d="M2.500 0V3M4.500 0V3M6.500 0V3M8.500 0V3M10.500 0V3"/></g></svg>
<!-- books page x1200-1217,y118-136 -->
<svg width="18" height="19" style="left:34px;top:32px" viewBox="0 0 18 19"><path d="M0.500 18L6 1.500 9 2.500 3.500 18.500Z" fill="#555" stroke="#222" stroke-width=".6"/><rect x="8" y="1" width="3.600" height="17.500" fill="#333" stroke="#111" stroke-width=".5"/><rect x="11.800" y="0.600" width="2.800" height="17.900" fill="#1c1c1c"/><rect x="14.800" y="1.500" width="2.600" height="17" fill="#444" stroke="#111" stroke-width=".5"/><path d="M9 3V16M12.800 3V16M16 3.500V16" stroke="#999" stroke-width=".7"/></svg>
<!-- key page x1230-1252,y120-132 -->
<svg width="22" height="13" style="left:64px;top:34px" viewBox="0 0 22 13"><ellipse cx="4.200" cy="6" rx="3" ry="4.600" fill="none" stroke="#000" stroke-width="2.200"/><path d="M7.500 4.800H21.500V11H19.800V7.800H18.600V11H17V7.800H15.800V11H14.200V7.400H7.500Z" fill="#000"/></svg>
<!-- tag page x1262-1278,y119-135 -->
<svg width="18" height="18" style="left:95px;top:32px" viewBox="0 0 18 18"><path d="M9.500 3L14.500 1.200 16.500 3.200 16.800 7.500 7.200 16.800 1.200 10.800Z" fill="#b9b9b9" stroke="#777" stroke-width="1" stroke-linejoin="round"/><circle cx="13.600" cy="4.500" r="1.300" fill="#f2f2f2" stroke="#777" stroke-width=".7"/></svg>
<!-- camera+disc page x1293-1309,y119-134 -->
<svg width="18" height="17" style="left:126px;top:32px" viewBox="0 0 18 17"><path d="M0.500 8Q0.500 7 1.500 7H3L4 5.500H8L9 7H12Q13 7 13 8V14.500Q13 15.500 12 15.500H1.500Q0.500 15.500 0.500 14.500Z" fill="#9a9a9a" stroke="#555" stroke-width=".8"/><circle cx="6" cy="11" r="1.600" fill="#222"/><rect x="2" y="9.500" width="1.300" height="4" fill="#222"/><rect x="10" y="9.500" width="1.300" height="4" fill="#222"/><circle cx="11.800" cy="5.200" r="4.600" fill="#e4e4e4" stroke="#8a8a8a" stroke-width=".8"/><circle cx="11.800" cy="5.200" r="1.700" fill="#bdbdbd" stroke="#8a8a8a" stroke-width=".5"/></svg>
<!-- n. bubble page x1322-1339,y118-136 -->
<svg width="18" height="19" style="left:156px;top:32px" viewBox="0 0 18 19"><path d="M1 0.600H17V14.500H6.500L3.800 17.500 3.500 14.500H1Z" fill="#c9c9c9" stroke="#555" stroke-width="1" stroke-linejoin="round"/><text x="9.500" y="11.500" text-anchor="middle" font-family="Liberation Sans" font-size="13" fill="#000">n.</text></svg>
<svg width="9" height="7" style="left:190px;top:38px" viewBox="0 0 9 7"><path d="M0.800 0.800L3.600 3.500 0.800 6.200M5 0.800L7.800 3.500 5 6.200" fill="none" stroke="#000" stroke-width="1.400"/></svg>
<!-- Synopsis header page y139(border)-161(border): top=53,height=23 -->
<div class="ihdr" style="top:53px;height:23px;line-height:23px;padding-left:18px">Synopsis</div>
<svg width="11" height="10" style="left:2px;top:60px" viewBox="0 0 11 10"><path d="M0 0H11L5.500 10Z" fill="#595959"/></svg>
<svg width="13" height="10" style="left:141px;top:58px" viewBox="0 0 13 10"><rect x="0.500" y="0.500" width="12" height="9" rx="1.200" fill="#fff" stroke="#808080"/><path d="M1 2.500H12" stroke="#eeb4b4" stroke-width="1"/><path d="M1 4.500H12M1 6.500H12" stroke="#b5cdea" stroke-width="1"/></svg>
<svg width="7" height="15" style="left:160px;top:58px" viewBox="0 0 7 15"><path d="M3.500 0L7 6H0Z" fill="#666"/><path d="M3.500 15L7 9H0Z" fill="#666"/></svg>
<div class="vs" style="left:173px;top:54px;height:21px;background:#aab0b8"></div>
<svg width="14" height="12" style="left:180px;top:60px" viewBox="0 0 14 12"><path d="M6.500 2H13V11H1V6" fill="none" stroke="#444" stroke-width="1.200"/><path d="M0.500 0.600H5.500V4.500H0.500Z" fill="none" stroke="#444" stroke-width="1" stroke-dasharray="1.500 1"/><path d="M6.500 5L10.500 8.500M10.500 8.500V6M10.500 8.500H8" stroke="#444" stroke-width="1" fill="none"/></svg>
<!-- synopsis card page y162-281 -->
<div class="a" style="left:0;top:76px;width:202px;height:120px;background:#fff"></div>
<div class="a" style="left:7px;top:83px;font-family:'Liberation Mono',monospace;font-size:13.33px;line-height:16px;white-space:nowrap;color:#111">WhereHow: Consortium E…</div>
<div class="a" style="left:0;top:101px;width:202px;height:2px;background:#ecd0ce"></div>
<div class="a" style="left:0;top:122px;width:197px;height:61px;background:repeating-linear-gradient(#c9d8e6 0,#c9d8e6 1px,transparent 1px,transparent 15px)"></div>
<!-- General Meta-Data header page y281-303 -->
<div class="ihdr" style="top:195px;height:23px;line-height:23px;padding-left:18px">General Meta-Data</div>
<svg width="11" height="10" style="left:2px;top:202px" viewBox="0 0 11 10"><path d="M0 0H11L5.500 10Z" fill="#595959"/></svg>
<div class="lbl" style="left:4px;top:225px">Label:</div>
<div class="icmb" style="top:224px"><svg width="7" height="7" style="left:9px;top:4px" viewBox="0 0 7 7"><path d="M0.600 0.600L6.400 6.400M6.400 0.600L0.600 6.400" stroke="#555" stroke-width="1.500"/></svg><span style="position:absolute;left:22px">No Label</span><i></i></div>
<div class="lbl" style="left:4px;top:246px">Status:</div>
<div class="icmb" style="top:244px"><span style="position:absolute;left:3px">No Status</span><i></i></div>
<div class="lbl" style="left:5px;top:267px">Modified:</div>
<svg width="7" height="13" style="left:62px;top:268px" viewBox="0 0 7 13"><path d="M3.500 0L7 5H0Z" fill="#666"/><path d="M3.500 13L7 8H0Z" fill="#666"/></svg>
<div class="lbl" style="left:86px;top:267px;letter-spacing:0">3/19/2018 8:48:24 AM</div>
<div class="cb" style="top:288px"><svg width="11" height="11" style="left:0;top:0" viewBox="0 0 11 11"><path d="M1.500 5.500L4.200 8.500 9.800 1.800" fill="none" stroke="#222" stroke-width="1.300"/></svg></div>
<div class="lbl" style="left:22px;top:288px">Include in Compile</div>
<div class="cb" style="top:305px"></div>
<div class="lbl" style="left:22px;top:305px">Page Break Before</div>
<div class="cb" style="top:322px"></div>
<div class="lbl" style="left:22px;top:322px">Compile As-Is</div>
<!-- Document Notes header page y427-449 -->
<div class="ihdr" style="top:341px;height:23px;line-height:23px;padding-left:2px">Document Notes</div>
<svg width="7" height="15" style="left:186px;top:345px" viewBox="0 0 7 15"><path d="M3.500 0L7 6H0Z" fill="#666"/><path d="M3.500 15L7 9H0Z" fill="#666"/></svg>
<div class="a" style="left:0;top:364px;width:202px;height:276px;background:#fff8e0"></div>
</div></div>
<div id="isplit"></div>
</body>
</html>
